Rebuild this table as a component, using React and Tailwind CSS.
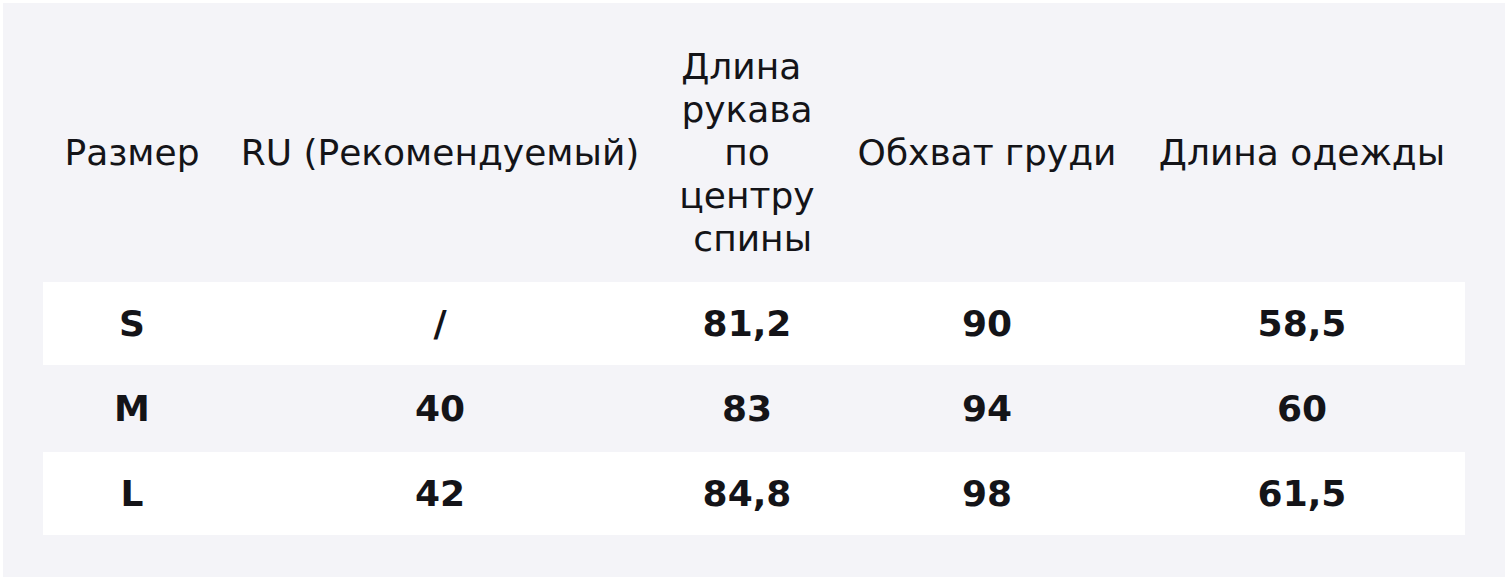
export default function App() {
  const headers = [
    "Размер",
    "RU (Рекомендуемый)",
    "Длина\u00a0 рукава по центру \u00a0спины",
    "Обхват груди",
    "Длина одежды",
  ];
  const rows = [
    { cells: ["S", "/", "81,2", "90", "58,5"], bg: "bg-white", h: "h-[83px]" },
    { cells: ["M", "40", "83", "94", "60"], bg: "bg-[#f4f4f8]", h: "h-[87px]" },
    { cells: ["L", "42", "84,8", "98", "61,5"], bg: "bg-white", h: "h-[83px]" },
  ];
  return (
    <div className="w-[1508px] h-[580px] bg-white p-[3px]" style={{ fontFamily: '"DejaVu Sans", sans-serif' }}>
      <div className="h-[574px] bg-[#f4f4f8] px-[40px] pt-[20px] text-[#141418]">
        <table className="w-[1422px] table-fixed border-collapse text-[36px] leading-[43px]">
          <colgroup>
            <col className="w-[178px]" />
            <col className="w-[438px]" />
            <col className="w-[176px]" />
            <col className="w-[304px]" />
            <col className="w-[326px]" />
          </colgroup>
          <thead>
            <tr>
              {headers.map((h) => (
                <th key={h} className="px-[16px] py-[22px] text-center align-middle font-normal">
                  {h}
                </th>
              ))}
            </tr>
          </thead>
          <tbody>
            {rows.map((r, i) => (
              <tr key={i} className={`${r.bg} ${r.h}`}>
                {r.cells.map((c, j) => (
                  <td key={j} className="px-[16px] py-0 text-center align-middle font-bold">
                    {c}
                  </td>
                ))}
              </tr>
            ))}
          </tbody>
        </table>
      </div>
    </div>
  );
}
